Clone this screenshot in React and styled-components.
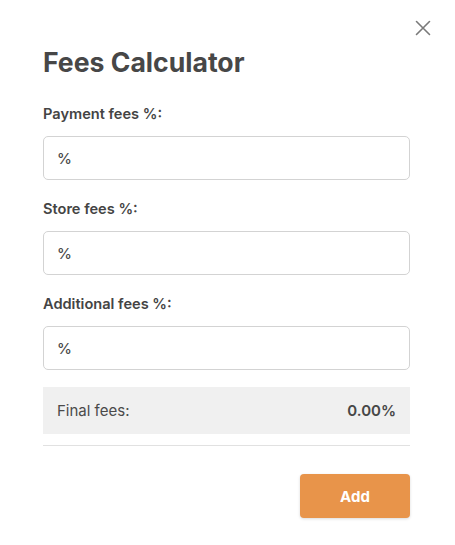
import React from "react";
import styled, { createGlobalStyle } from "styled-components";

const GlobalStyle = createGlobalStyle`
  html, body {
    margin: 0;
    padding: 0;
    background: #ffffff;
  }
  body {
    font-family: Inter, "Noto Sans", "Liberation Sans", sans-serif;
    -webkit-font-smoothing: antialiased;
  }
`;

const fields = ["Payment fees %:", "Store fees %:", "Additional fees %:"];

export default function App() {
  return (
    <>
      <GlobalStyle />
      <Modal>
        <CloseButton aria-label="Close">
          <svg width="16" height="16" viewBox="0 0 16 16">
            <path d="M1.5 1.5L14.5 14.5M14.5 1.5L1.5 14.5" stroke="#7a7a7a" strokeWidth="1.6" strokeLinecap="round" />
          </svg>
        </CloseButton>
        <Title>Fees Calculator</Title>
        <Form>
          {fields.map((label) => (
            <Field key={label}>
              <Label>{label}</Label>
              <Input placeholder="%" />
            </Field>
          ))}
        </Form>
        <Result>
          <ResultLabel>Final fees:</ResultLabel>
          <ResultValue>0.00%</ResultValue>
        </Result>
        <Divider />
        <Footer>
          <Button>Add</Button>
        </Footer>
      </Modal>
    </>
  );
}

// Styled Components
const Modal = styled.div`
  position: relative;
  box-sizing: border-box;
  width: 455px;
  height: 545px;
  padding: 45px 45px 0 43px;
  background: #ffffff;
`;

const CloseButton = styled.button`
  position: absolute;
  top: 20px;
  right: 24px;
  display: flex;
  padding: 0;
  border: none;
  background: none;
  cursor: pointer;
`;

const Title = styled.h1`
  margin: 0;
  font-size: 26.6px;
  line-height: 34px;
  font-weight: 700;
  color: #474747;
`;

const Form = styled.div`
  display: flex;
  flex-direction: column;
  gap: 19px;
  margin-top: 25px;
`;

const Field = styled.div`
  display: flex;
  flex-direction: column;
  gap: 12px;
`;

const Label = styled.label`
  font-size: 14.6px;
  line-height: 20px;
  font-weight: 600;
  color: #444444;
`;

const Input = styled.input`
  box-sizing: border-box;
  width: 100%;
  height: 44px;
  padding: 0 13px;
  border: 1.5px solid #d3d3d3;
  border-radius: 5px;
  font-family: inherit;
  font-size: 15px;
  color: #444444;
  background: #ffffff;

  &::placeholder {
    color: #4a4a4a;
    font-weight: 500;
  }

  &:focus {
    border-color: #282828;
    outline: none;
  }
`;

const Result = styled.div`
  display: flex;
  align-items: center;
  justify-content: space-between;
  height: 47px;
  margin-top: 17px;
  padding: 0 14px;
  background: #f0f0f0;
`;

const ResultLabel = styled.span`
  font-size: 15px;
  color: #4a4a4a;
`;

const ResultValue = styled.span`
  font-size: 15px;
  font-weight: 600;
  color: #474747;
`;

const Divider = styled.hr`
  margin: 11px 0 0;
  border: none;
  border-top: 1.5px solid #e1e1e1;
`;

const Footer = styled.div`
  display: flex;
  justify-content: flex-end;
  margin-top: 28px;
`;

const Button = styled.button`
  width: 110px;
  height: 44px;
  border: none;
  border-radius: 4px;
  background: #e8944a;
  color: #ffffff;
  font-family: inherit;
  font-size: 15px;
  font-weight: 700;
  box-shadow: 0 1px 3px rgba(0, 0, 0, 0.15);
  cursor: pointer;
`;
